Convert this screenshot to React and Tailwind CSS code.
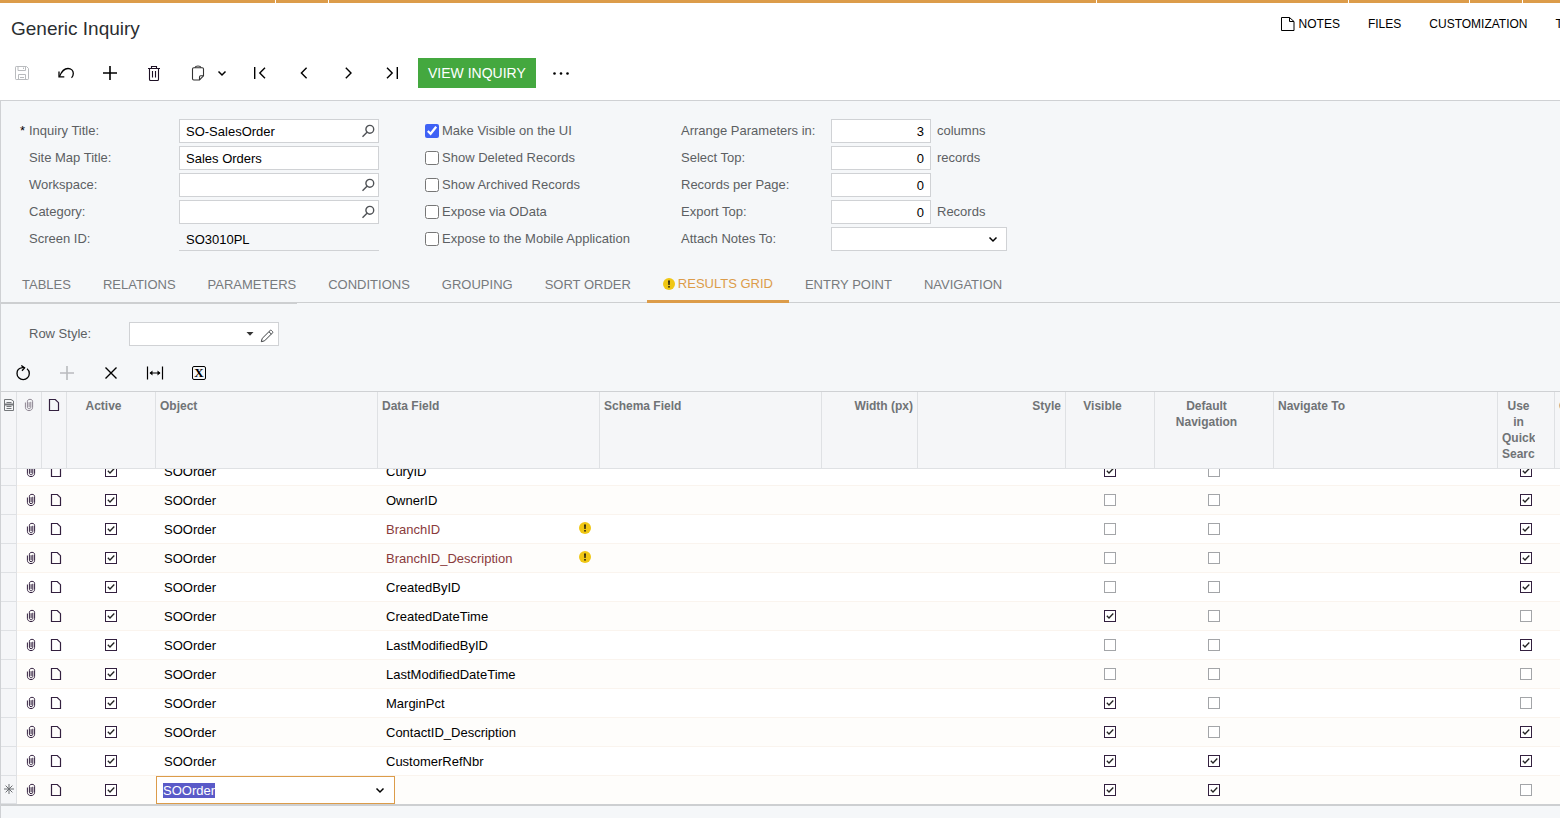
import { useLayoutEffect, useRef } from 'react';

function Icon({ w = 16, h = 16, className = '', children, sw = 1.2 }) {
  return (
    <svg
      width={w}
      height={h}
      viewBox={`0 0 ${w} ${h}`}
      fill="none"
      stroke="currentColor"
      strokeWidth={sw}
      className={`shrink-0 ${className}`}
      aria-hidden="true"
    >
      {children}
    </svg>
  );
}

const SaveIcon = () => (
  <Icon sw={1} className="text-[#b9bbbe]">
    <path d="M1.500 2.200c0-.4.3-.7.7-.7h10.300l2 2v10.300c0 .4-.3.700-.7.700H2.200c-.4 0-.7-.3-.7-.7z" />
    <path d="M4 1.500v4h7.500v-4M9.500 2.500v1.500M4.500 14.500v-5h7v5M6 12.500h4" />
  </Icon>
);
const UndoIcon = () => (
  <Icon w={18} sw={1.3}>
    <path d="M2.500 11.500C4.500 6.500 7 3.500 11 3.500c3.200 0 5.300 2.200 5.300 5 0 1.700-.7 3.200-1.800 4.200" />
    <path d="M2 6.500v5.300h5.300" />
  </Icon>
);
const PlusIcon = ({ sw = 1.6 }) => (
  <Icon sw={sw}>
    <path d="M8 1v14M1 8h14" />
  </Icon>
);
const TrashIcon = () => (
  <Icon w={14} sw={1.1} className="text-[#1d1024]">
    <path d="M1 3.500h12M4.500 3.200V1.500h5v2M2.500 3.500v10.800c0 .8.3 1.200 1 1.200h7c.7 0 1-.4 1-1.200V3.500M5.500 6v6.500M8.500 6v6.500" />
  </Icon>
);
const PasteIcon = () => (
  <Icon w={14} sw={1.1} className="text-[#333]">
    <path d="M8.500 15H2.800C2 15 1.500 14.500 1.500 13.800V4c0-.8.5-1.300 1.300-1.300h8.400c.8 0 1.300.5 1.300 1.300v6.800L8.500 15z" />
    <path d="M4 2.700C4.300 1.500 5.200 1 7 1s2.700.5 3 1.700M8.500 15v-3c0-.8.4-1.200 1.200-1.200h2.800" />
  </Icon>
);
const ChevronDown = () => (
  <Icon w={10} h={8} sw={1.5}>
    <path d="M1.500 2.500L5 6 8.500 2.500" />
  </Icon>
);
const FirstIcon = () => (
  <Icon sw={1.4}>
    <path d="M2.700 2v12M13 2.800L7.800 8l5.200 5.200" />
  </Icon>
);
const PrevIcon = () => (
  <Icon sw={1.4}>
    <path d="M10.600 2.800L5.400 8l5.200 5.200" />
  </Icon>
);
const NextIcon = () => (
  <Icon sw={1.4}>
    <path d="M5.800 2.800L11 8l-5.200 5.200" />
  </Icon>
);
const LastIcon = () => (
  <Icon sw={1.4}>
    <path d="M3 2.800L8.200 8 3 13.200M13.300 2v12" />
  </Icon>
);
const DotsIcon = () => (
  <Icon w={18} sw={0}>
    <g fill="currentColor">
      <circle cx="2.500" cy="8.500" r="1.300" />
      <circle cx="9" cy="8.500" r="1.300" />
      <circle cx="15.500" cy="8.500" r="1.300" />
    </g>
  </Icon>
);
const NoteIcon = () => (
  <Icon w={14} sw={1}>
    <path d="M.5 1.500h8l4.500 4v9H.5zM8.500 1.500v4H13" />
  </Icon>
);
const SearchIcon = () => (
  <Icon w={14} h={14} sw={1.4} className="text-[#4f5256]">
    <circle cx="8.800" cy="5.300" r="3.900" />
    <path d="M6 8.200L1.500 12.700" />
  </Icon>
);
const PencilIcon = () => (
  <Icon w={14} h={14} sw={1} className="text-[#3c3f42]">
    <path d="M1.300 12.700l.9-3.300L10 1.600c.5-.5 1.100-.5 1.600 0l.8.8c.5.5.5 1.100 0 1.600l-7.800 7.800zM9 2.800L11.300 5" />
  </Icon>
);
const RefreshIcon = () => (
  <Icon sw={1.3}>
    <path d="M12 3.700c1.400 1.100 2.300 2.700 2.300 4.700 0 3.500-2.700 6.200-6.100 6.200S2 11.900 2 8.400c0-2.900 2-5.300 5.500-5.700h2" />
    <path d="M6.300.5L9.600 2.900 7 5.800" />
  </Icon>
);
const CloseIcon = () => (
  <Icon sw={1.4}>
    <path d="M2.500 2.500l11 11M13.500 2.500l-11 11" />
  </Icon>
);
const FitIcon = () => (
  <Icon w={18} sw={1.2}>
    <path d="M1.500 1.500v13M16.500 1.500v13M4 8h10" />
    <path d="M6.500 5.500L3.500 8l3 2.500zM11.500 5.500l3 2.500-3 2.500z" fill="currentColor" stroke="none" />
  </Icon>
);
const ClipIcon = ({ className = '' }) => (
  <Icon w={10} h={14} sw={1} className={className}>
    <path d="M6.800 3.800v5.400c0 2-3.400 2-3.400 0V3.300c0-2.600 5.200-2.600 5.200 0v6c0 4.400-7.200 4.400-7.200 0V4.500M5.100 4.200v5" />
  </Icon>
);
const DocIcon = () => (
  <Icon w={12} h={14} sw={1.2} className="text-[#33203f]">
    <path d="M1.500 1.500h5.800l3.200 3.200v7.800h-9z" />
  </Icon>
);
const ListIcon = () => (
  <Icon w={12} h={14} sw={1} className="text-[#74777a]">
    <path d="M1.500 1.500h6.500l2.500 1.500v9.500h-9zM3.500 4.500h5M1 6.500h10M3.500 8.500h5M3.500 10.500h5" />
    <path d="M1.500 6.500h9" strokeWidth="2" />
  </Icon>
);
const StarIcon = () => (
  <Icon w={10} h={10} sw={1} className="text-[#6b6e72]">
    <path d="M5 0v10M0 5h10M1.600 1.600l6.800 6.800M8.400 1.600L1.600 8.400" />
  </Icon>
);
const WarnIcon = () => (
  <svg width="12" height="12" viewBox="0 0 12 12" className="shrink-0" role="img" aria-label="Warning">
    <circle cx="6" cy="6" r="6" fill="#f0c714" />
    <path d="M5 2.500h2L6.700 7H5.300z" fill="#2b2610" />
    <rect x="5.200" y="8" width="1.600" height="1.600" fill="#2b2610" />
  </svg>
);

function ToolButton({ label, children, disabled }) {
  return (
    <button type="button" aria-label={label} disabled={disabled} className="flex h-[30px] w-11 shrink-0 items-center justify-center">
      {children}
    </button>
  );
}

const FIELD = 'h-6 border border-[#d0d2d5] bg-white';

function LookupField({ id, label, value = '', lookup, required, readOnly }) {
  return (
    <div className="flex">
      <span className="w-7 shrink-0 pr-1 text-right leading-6 text-black">{required ? '*' : ''}</span>
      <label htmlFor={id} className="w-[150px] shrink-0 leading-6">
        {label}
      </label>
      {readOnly ? (
        <input id={id} readOnly defaultValue={value} className="h-6 w-[200px] border-y border-[#d0d2d5] border-t-transparent bg-transparent px-[7px] text-black outline-none" />
      ) : (
        <div className={`flex w-[200px] items-center ${FIELD}`}>
          <input id={id} defaultValue={value} className="h-full w-0 flex-1 px-1.5 text-black outline-none" />
          {lookup && (
            <button type="button" aria-label={`Find ${label}`} className="px-[3px]">
              <SearchIcon />
            </button>
          )}
        </div>
      )}
    </div>
  );
}

function CheckField({ label, checked }) {
  return (
    <label className="flex h-6 items-center gap-[3px]">
      <input type="checkbox" defaultChecked={checked} className="size-3.5 accent-[#3f62f5]" />
      <span className="leading-6">{label}</span>
    </label>
  );
}

function NumberField({ id, label, value, suffix }) {
  return (
    <div className="flex">
      <label htmlFor={id} className="w-[150px] shrink-0 leading-6">
        {label}
      </label>
      <input id={id} defaultValue={value} inputMode="numeric" className={`w-[100px] px-1.5 text-right text-black outline-none ${FIELD}`} />
      <span className="pl-1.5 leading-6">{suffix}</span>
    </div>
  );
}

function GridCheck({ label, checked }) {
  return (
    <span className="mx-auto grid size-3 place-items-center">
      <input
        type="checkbox"
        aria-label={label}
        defaultChecked={checked}
        className="peer col-start-1 row-start-1 size-3 appearance-none border border-[#a3a5a8] bg-white checked:border-[#33203f]"
      />
      <svg width="12" height="12" viewBox="0 0 12 12" fill="none" stroke="#222" strokeWidth="1.300" className="pointer-events-none invisible col-start-1 row-start-1 peer-checked:visible">
        <path d="M2.800 5.800L5 8l4.300-4.500" />
      </svg>
    </span>
  );
}

const TABS = ['TABLES', 'RELATIONS', 'PARAMETERS', 'CONDITIONS', 'GROUPING', 'SORT ORDER', 'RESULTS GRID', 'ENTRY POINT', 'NAVIGATION'];

const ROWS = [
  { field: 'CuryID', visible: true, nav: false, quick: true },
  { field: 'OwnerID', visible: false, nav: false, quick: true },
  { field: 'BranchID', warn: true, visible: false, nav: false, quick: true },
  { field: 'BranchID_Description', warn: true, visible: false, nav: false, quick: true },
  { field: 'CreatedByID', visible: false, nav: false, quick: true },
  { field: 'CreatedDateTime', visible: true, nav: false, quick: false },
  { field: 'LastModifiedByID', visible: false, nav: false, quick: true },
  { field: 'LastModifiedDateTime', visible: false, nav: false, quick: false },
  { field: 'MarginPct', visible: true, nav: false, quick: false },
  { field: 'ContactID_Description', visible: true, nav: false, quick: true },
  { field: 'CustomerRefNbr', visible: true, nav: true, quick: true },
  { field: '', editing: true, visible: true, nav: true, quick: false },
];

const TH = 'sticky top-0 z-10 h-[77px] border-r border-b border-[#dfe1e4] bg-[#f5f6f8] pt-[6px] align-top text-xs leading-4 font-bold text-[#707376]';
const CENTER = 'pr-[19px] pl-1 text-center';

function ObjectEditor() {
  const ref = useRef(null);
  useLayoutEffect(() => {
    ref.current.focus({ preventScroll: true });
    ref.current.select();
  }, []);
  return (
    <div className="absolute top-0 left-0 z-[5] flex h-7 w-[239px] items-center border border-[#dc9c4a] bg-white">
      <input
        ref={ref}
        aria-label="Object"
        defaultValue="SOOrder"
        className="h-full w-0 flex-1 px-1.5 outline-none selection:bg-[#5a5ac8] selection:text-white"
      />
      <button type="button" aria-label="Open object list" className="px-[9px]">
        <ChevronDown />
      </button>
    </div>
  );
}

function Grid() {
  const scroller = useRef(null);
  useLayoutEffect(() => {
    scroller.current.scrollTop = scroller.current.scrollHeight;
  }, []);
  return (
    <div ref={scroller} className="min-h-0 flex-1 overflow-hidden border-t border-b-2 border-t-[#cfd1d4] border-b-[#cdcfd1]">
      <table className="w-full min-w-[1594px] table-fixed border-separate border-spacing-0 text-[13px] text-black">
        <colgroup>
          <col className="w-4" />
          <col className="w-[25px]" />
          <col className="w-[25px]" />
          <col className="w-[89px]" />
          <col className="w-[222px]" />
          <col className="w-[222px]" />
          <col className="w-[222px]" />
          <col className="w-24" />
          <col className="w-[148px]" />
          <col className="w-[89px]" />
          <col className="w-[119px]" />
          <col className="w-56" />
          <col className="w-[57px]" />
          <col />
        </colgroup>
        <thead>
          <tr>
            <th className={TH} aria-label="Row settings">
              <span className="flex justify-center"><ListIcon /></span>
            </th>
            <th className={TH} aria-label="Files">
              <span className="flex justify-center"><ClipIcon className="text-[#8d8592]" /></span>
            </th>
            <th className={TH} aria-label="Notes">
              <span className="flex justify-center"><DocIcon /></span>
            </th>
            <th className={`${TH} ${CENTER}`}>Active</th>
            <th className={`${TH} px-1 text-left`}>Object</th>
            <th className={`${TH} px-1 text-left`}>Data Field</th>
            <th className={`${TH} px-1 text-left`}>Schema Field</th>
            <th className={`${TH} px-1 text-right`}>Width (px)</th>
            <th className={`${TH} px-1 text-right`}>Style</th>
            <th className={`${TH} ${CENTER}`}>Visible</th>
            <th className={`${TH} ${CENTER}`}>Default Navigation</th>
            <th className={`${TH} px-1 text-left`}>Navigate To</th>
            <th className={`${TH} ${CENTER}`}>
              <div className="overflow-hidden">Use in Quick Search</div>
            </th>
            <th className={`${TH} px-1 text-left`}>C</th>
          </tr>
        </thead>
        <tbody>
          {ROWS.map((r) => (
            <tr
              key={r.field}
              className="bg-white even:bg-[#fefdfb] [&>td]:h-[29px] [&>td]:border-b [&>td]:border-[#faf4ee] last:[&>td]:h-7 last:[&>td]:border-b-0"
            >
              <th scope="row" aria-label="Row" className="border-r border-b border-[#dfe1e4] bg-[#f5f6f8]">
                {r.editing && <span className="flex justify-center pb-0.5"><StarIcon /></span>}
              </th>
              <td><span className="flex justify-center pl-0.5"><ClipIcon className="text-[#33203f]" /></span></td>
              <td><span className="flex justify-center pl-[3px]"><DocIcon /></span></td>
              <td className="pr-0.5"><GridCheck label="Active" checked /></td>
              <td className="relative px-2 pt-0.5">{r.editing ? <ObjectEditor /> : 'SOOrder'}</td>
              <td className="px-2">
                <div className="flex items-center justify-between">
                  <span className={r.warn ? 'pt-0.5 text-[#8a3b3b]' : 'pt-0.5'}>{r.field}</span>
                  {r.warn && <span className="pr-px pb-0.5"><WarnIcon /></span>}
                </div>
              </td>
              <td />
              <td />
              <td />
              <td className="pr-0.5"><GridCheck label="Visible" checked={r.visible} /></td>
              <td className="pr-0.5"><GridCheck label="Default Navigation" checked={r.nav} /></td>
              <td />
              <td className="pr-0.5"><GridCheck label="Use in Quick Search" checked={r.quick} /></td>
              <td />
            </tr>
          ))}
        </tbody>
      </table>
    </div>
  );
}

export default function App() {
  return (
    <div className="flex h-screen flex-col overflow-hidden bg-white font-['Liberation_Sans',Arial,sans-serif] text-[13px] text-[#5c5f63]">
      <div className="flex h-[3px] shrink-0 gap-px [&>div]:bg-[#dc9c4a]">
        <div className="w-[275px]" />
        <div className="w-[52px]" />
        <div className="flex-1" />
        <div className="w-[251px]" />
        <div className="w-[120px]" />
        <div className="w-[52px]" />
        <div className="w-[37px]" />
      </div>

      <header className="shrink-0 overflow-hidden pb-3">
        <div className="flex h-[55px] items-start justify-between pl-[11px]">
          <h1 className="pt-3.5 text-[19px] leading-6 text-[#2b2e31]">Generic Inquiry</h1>
          <nav className="-mr-9 flex gap-7 pt-[13px] text-xs leading-4 text-black">
            <a href="#notes" className="flex items-center gap-1"><NoteIcon />NOTES</a>
            <a href="#files">FILES</a>
            <a href="#customization">CUSTOMIZATION</a>
            <a href="#tools">TOOLS</a>
          </nav>
        </div>
        <div className="flex items-center text-black">
          <ToolButton label="Save" disabled><SaveIcon /></ToolButton>
          <ToolButton label="Undo"><UndoIcon /></ToolButton>
          <ToolButton label="Add"><PlusIcon /></ToolButton>
          <ToolButton label="Delete"><TrashIcon /></ToolButton>
          <button type="button" aria-label="Clipboard" className="flex h-[30px] w-[62px] items-center gap-3 pl-[15px]">
            <PasteIcon />
            <ChevronDown />
          </button>
          <ToolButton label="First"><FirstIcon /></ToolButton>
          <ToolButton label="Previous"><PrevIcon /></ToolButton>
          <ToolButton label="Next"><NextIcon /></ToolButton>
          <ToolButton label="Last"><LastIcon /></ToolButton>
          <button type="button" className="ml-1 h-[30px] bg-[#44a83f] px-2.5 text-sm text-white">VIEW INQUIRY</button>
          <button type="button" aria-label="More" className="flex h-[30px] w-[50px] items-center justify-center"><DotsIcon /></button>
        </div>
      </header>

      <main className="flex min-h-0 flex-1 flex-col border-t border-l border-[#cfd1d4] bg-[#f5f7f9] pb-3">
        <form className="flex shrink-0 pt-[18px]">
          <div className="mr-[46px] flex flex-col gap-[3px]">
            <LookupField id="title" label="Inquiry Title:" value="SO-SalesOrder" lookup required />
            <LookupField id="sitemap" label="Site Map Title:" value="Sales Orders" />
            <LookupField id="workspace" label="Workspace:" lookup />
            <LookupField id="category" label="Category:" lookup />
            <LookupField id="screen" label="Screen ID:" value="SO3010PL" readOnly />
          </div>
          <div className="flex w-64 flex-col gap-[3px]">
            <CheckField label="Make Visible on the UI" checked />
            <CheckField label="Show Deleted Records" />
            <CheckField label="Show Archived Records" />
            <CheckField label="Expose via OData" />
            <CheckField label="Expose to the Mobile Application" />
          </div>
          <div className="flex flex-col gap-[3px]">
            <NumberField id="arrange" label="Arrange Parameters in:" value="3" suffix="columns" />
            <NumberField id="top" label="Select Top:" value="0" suffix="records" />
            <NumberField id="perpage" label="Records per Page:" value="0" />
            <NumberField id="export" label="Export Top:" value="0" suffix="Records" />
            <div className="flex">
              <label htmlFor="attach" className="w-[150px] shrink-0 leading-6">Attach Notes To:</label>
              <div className="grid w-44 items-center">
                <select id="attach" className={`col-start-1 row-start-1 w-full appearance-none px-1.5 text-black ${FIELD}`}>
                  <option value="" />
                </select>
                <span className="pointer-events-none col-start-1 row-start-1 mr-[9px] justify-self-end text-black"><ChevronDown /></span>
              </div>
            </div>
          </div>
        </form>

        <nav className="mt-4 flex h-9 shrink-0 border-b border-[#cdcfd1] pl-[5px] text-[#777a7d]" role="tablist">
          {TABS.map((t) =>
            t === 'RESULTS GRID' ? (
              <button key={t} type="button" role="tab" aria-selected="true" className="-mb-px flex items-center gap-[3px] border-b-[3px] border-[#dc9c4a] px-4 text-[#dc9c4a]">
                <WarnIcon />
                {t}
              </button>
            ) : (
              <button key={t} type="button" role="tab" aria-selected="false" className="px-4">
                {t}
              </button>
            ),
          )}
        </nav>
        <div className="-mb-px h-px w-[296px] shrink-0 bg-[#cdcfd1]" />

        <div className="flex shrink-0 pt-[19px] pl-7">
          <label htmlFor="rowstyle" className="w-[100px] leading-6">Row Style:</label>
          <div className={`flex w-[150px] items-center ${FIELD}`}>
            <input id="rowstyle" className="h-full w-0 flex-1 px-1.5 text-black outline-none" />
            <button type="button" aria-label="Open styles" className="px-1">
              <svg width="8" height="4" viewBox="0 0 8 4" fill="#333"><path d="M.5 0h7L4 3.800z" /></svg>
            </button>
            <button type="button" aria-label="Edit style" className="pt-1 pr-1 pl-0.5"><PencilIcon /></button>
          </div>
        </div>

        <div className="flex shrink-0 pt-3 pb-[3px] text-black">
          <ToolButton label="Refresh"><RefreshIcon /></ToolButton>
          <ToolButton label="Add row" disabled><span className="text-[#b9bbbe]"><PlusIcon /></span></ToolButton>
          <ToolButton label="Delete row"><CloseIcon /></ToolButton>
          <ToolButton label="Fit columns"><FitIcon /></ToolButton>
          <ToolButton label="Export to Excel">
            <span className="flex size-3.5 items-center justify-center rounded-[2px] border border-black font-['Liberation_Serif',serif] text-[13px] leading-3 font-bold">X</span>
          </ToolButton>
        </div>

        <Grid />
      </main>
    </div>
  );
}
